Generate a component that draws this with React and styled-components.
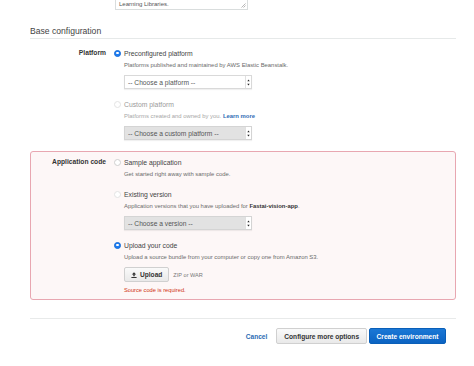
import React from "react";
import styled, { createGlobalStyle } from "styled-components";

const Global = createGlobalStyle`
  html, body { margin: 0; padding: 0; background: #ffffff; }
  body { font-family: "Liberation Sans", Arial, Helvetica, sans-serif; color: #333; }
`;

const Page = styled.div`
  width: 474px;
  height: 366px;
  overflow: hidden;
  padding: 0 18px 0 30px;
  box-sizing: border-box;
`;

const Row = styled.div`
  display: grid;
  grid-template-columns: ${(p) => (p.$inset ? "83px" : "84px")} 1fr;
  margin-top: ${(p) => p.$mt || 0}px;
`;

const Label = styled.div`
  text-align: right;
  padding-right: 8px;
  font-size: 6.7px;
  font-weight: bold;
  line-height: 10px;
  color: #333;
  white-space: nowrap;
`;

const TextArea = styled.div`
  position: relative;
  margin-left: 1px;
  width: 133px;
  height: 10px;
  box-sizing: border-box;
  border: 1px solid #d9dddd;
  border-top: none;
  padding: 0 3px;
  font-size: 6px;
  line-height: 8px;
  color: #555;
`;

const Grip = styled.svg`
  position: absolute;
  right: 1px;
  bottom: 1px;
`;

const Heading = styled.div`
  margin-top: 16px;
  padding-bottom: 1px;
  border-bottom: 1px solid #e6e9e9;
  font-size: 8.6px;
  line-height: 11px;
  color: #444;
`;

const Options = styled.div`
  display: flex;
  flex-direction: column;
  gap: 10px;
`;

const Option = styled.div`
  display: flex;
  flex-direction: column;
`;

const TitleLine = styled.label`
  display: flex;
  align-items: center;
  gap: 3px;
  height: 10px;
  font-size: 6.8px;
  color: ${(p) => (p.$muted ? "#9a9a9a" : "#444")};
`;

const Radio = styled.span`
  width: 7px;
  height: 7px;
  box-sizing: border-box;
  border-radius: 50%;
  flex: none;
  display: flex;
  align-items: center;
  justify-content: center;
  ${(p) =>
    p.$checked
      ? `background: #1d7cf2; border: 1px solid #1a6fd8;`
      : `background: #fff; border: 1px solid ${p.$disabled ? "#e3e3e3" : "#cfcfcf"};`}
  &::after {
    content: "";
    display: ${(p) => (p.$checked ? "block" : "none")};
    width: 2.4px;
    height: 2.4px;
    border-radius: 50%;
    background: #fff;
  }
`;

const Body = styled.div`
  padding-left: 10px;
`;

const Desc = styled.div`
  margin-top: 3px;
  font-size: 5.9px;
  line-height: 9px;
  color: ${(p) => (p.$muted ? "#a7a7a7" : "#6b6b6b")};
  white-space: nowrap;
  b { color: #333; }
`;

const LinkText = styled.span`
  color: #2f6db5;
  font-weight: bold;
`;

const Select = styled.div`
  margin-top: 5px;
  width: 128px;
  height: 14px;
  box-sizing: border-box;
  border: 1px solid ${(p) => (p.$disabled ? "#d4d4d4" : "#d9d9d9")};
  background: ${(p) => (p.$disabled ? "#e2e2e2" : "#ffffff")};
  display: flex;
  align-items: center;
  font-size: 6.7px;
  color: #555;
  box-shadow: 0 1px 1px rgba(0, 0, 0, 0.06);
`;

const SelectText = styled.span`
  flex: 1;
  padding-left: 3px;
`;

const Stepper = styled.span`
  width: 5px;
  height: 100%;
  background: #fff;
  border-left: 1px solid #e0e0e0;
  display: flex;
  align-items: center;
  justify-content: center;
`;

const ErrorBox = styled.div`
  margin-top: 11px;
  border: 1px solid #e8a7b1;
  border-radius: 3px;
  background: #fdf7f7;
  padding: 5px 0 4px 0;
`;

const UploadRow = styled.div`
  margin-top: 5px;
  display: flex;
  align-items: center;
  gap: 4px;
`;

const Button = styled.button`
  height: ${(p) => p.$h || 16}px;
  box-sizing: border-box;
  padding: 0 ${(p) => p.$px || 7}px;
  border-radius: 2px;
  font-family: inherit;
  font-size: 6.6px;
  font-weight: bold;
  display: flex;
  align-items: center;
  gap: 3px;
  cursor: pointer;
  ${(p) =>
    p.$primary
      ? `background: linear-gradient(#1b78d6, #0b63c2); border: 1px solid #0a5fb8; color: #fff;`
      : `background: linear-gradient(#fafafa, #e9e9e9); border: 1px solid #d0d0d0; color: #333;`}
`;

const Hint = styled.span`
  font-size: 5.6px;
  color: #777;
`;

const ErrorText = styled.div`
  margin-top: 4px;
  font-size: 5.7px;
  line-height: 9px;
  color: #d13212;
`;

const Divider = styled.div`
  margin-top: 18px;
  border-top: 1px solid #e8eaea;
`;

const Footer = styled.div`
  margin-top: 9px;
  padding-right: 10px;
  display: flex;
  justify-content: flex-end;
  align-items: center;
`;

const Cancel = styled.a`
  font-size: 6.6px;
  font-weight: bold;
  color: #2c6cb4;
  margin-right: 9px;
  text-decoration: none;
`;

const Spacer = styled.span`
  width: 2px;
`;

const StepperIcon = () => (
  <svg width="3" height="7" viewBox="0 0 3 7">
    <path d="M1.5 0.5 L2.7 2.3 L0.3 2.3 Z" fill="#222" />
    <path d="M1.5 6.5 L2.7 4.7 L0.3 4.7 Z" fill="#222" />
  </svg>
);

const SelectBox = ({ text, disabled }) => (
  <Select $disabled={disabled}>
    <SelectText>{text}</SelectText>
    <Stepper>
      <StepperIcon />
    </Stepper>
  </Select>
);

const UploadIcon = () => (
  <svg width="6" height="6" viewBox="0 0 6 6">
    <path d="M3 0.3 L5.2 2.6 L3.7 2.6 L3.7 4.3 L2.3 4.3 L2.3 2.6 L0.8 2.6 Z" fill="#333" />
    <rect x="0.4" y="5" width="5.2" height="1" fill="#333" />
  </svg>
);

export default function App() {
  return (
    <>
      <Global />
      <Page>
        <Row>
          <span />
          <TextArea>
            Learning Libraries.
            <Grip width="5" height="5" viewBox="0 0 5 5">
              <path d="M4.5 0.5 L0.5 4.5 M4.5 2.5 L2.5 4.5" stroke="#999" strokeWidth="0.7" />
            </Grip>
          </TextArea>
        </Row>

        <Heading>Base configuration</Heading>

        <Row $mt={9}>
          <Label>Platform</Label>
          <Options>
            <Option>
              <TitleLine>
                <Radio $checked />
                Preconfigured platform
              </TitleLine>
              <Body>
                <Desc>Platforms published and maintained by AWS Elastic Beanstalk.</Desc>
                <SelectBox text="-- Choose a platform --" />
              </Body>
            </Option>
            <Option>
              <TitleLine $muted>
                <Radio $disabled />
                Custom platform
              </TitleLine>
              <Body>
                <Desc $muted>
                  Platforms created and owned by you. <LinkText>Learn more</LinkText>
                </Desc>
                <SelectBox text="-- Choose a custom platform --" disabled />
              </Body>
            </Option>
          </Options>
        </Row>

        <ErrorBox>
          <Row $inset>
            <Label>Application code</Label>
            <Options>
              <Option>
                <TitleLine>
                  <Radio />
                  Sample application
                </TitleLine>
                <Body>
                  <Desc>Get started right away with sample code.</Desc>
                </Body>
              </Option>
              <Option>
                <TitleLine>
                  <Radio $disabled />
                  Existing version
                </TitleLine>
                <Body>
                  <Desc>
                    Application versions that you have uploaded for <b>Fastai-vision-app</b>.
                  </Desc>
                  <SelectBox text="-- Choose a version --" disabled />
                </Body>
              </Option>
              <Option>
                <TitleLine>
                  <Radio $checked />
                  Upload your code
                </TitleLine>
                <Body>
                  <Desc>Upload a source bundle from your computer or copy one from Amazon S3.</Desc>
                  <UploadRow>
                    <Button $h={15} $px={6}>
                      <UploadIcon />
                      Upload
                    </Button>
                    <Hint>ZIP or WAR</Hint>
                  </UploadRow>
                  <ErrorText>Source code is required.</ErrorText>
                </Body>
              </Option>
            </Options>
          </Row>
        </ErrorBox>

        <Divider />

        <Footer>
          <Cancel href="#">Cancel</Cancel>
          <Button $px={7}>Configure more options</Button>
          <Spacer />
          <Button $primary $px={6.5}>Create environment</Button>
        </Footer>
      </Page>
    </>
  );
}
